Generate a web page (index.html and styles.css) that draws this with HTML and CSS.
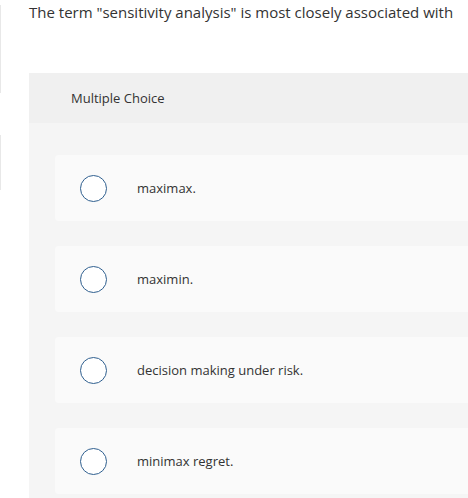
FILE: index.html
```html
<!DOCTYPE html>
<html>
<head>
<meta charset="utf-8">
<link rel="stylesheet" href="styles.css">
</head>
<body>
<div class="page">
  <div class="rail">
    <div class="rail-seg seg-a"></div>
    <div class="rail-seg seg-b"></div>
  </div>
  <div class="main">
    <p class="prompt">The term "sensitivity analysis" is most closely associated with</p>
    <div class="question">
      <div class="q-head">Multiple Choice</div>
      <div class="q-body">
        <div class="option"><span class="radio"></span><span class="label">maximax.</span></div>
        <div class="option"><span class="radio"></span><span class="label">maximin.</span></div>
        <div class="option"><span class="radio"></span><span class="label">decision making under risk.</span></div>
        <div class="option"><span class="radio"></span><span class="label">minimax regret.</span></div>
      </div>
    </div>
  </div>
</div>
</body>
</html>
```
FILE: styles.css
```css
html, body {
  margin: 0;
  padding: 0;
  background: #ffffff;
}
body {
  font-family: "Open Sans", "Liberation Sans", sans-serif;
  color: #333333;
  overflow: hidden;
}
.page {
  display: flex;
  width: 468px;
  height: 498px;
  overflow: hidden;
}
.rail {
  width: 2px;
  flex: none;
  display: flex;
  flex-direction: column;
}
.rail-seg {
  width: 1px;
  background: #e8e8e8;
}
.seg-a {
  margin-top: 5px;
  height: 88px;
}
.seg-b {
  margin-top: 42px;
  height: 55px;
}
.main {
  flex: 1;
  min-width: 0;
  padding-left: 27px;
}
.prompt {
  margin: 0;
  padding-top: 2px;
  height: 71px;
  font-size: 15px;
  line-height: 20px;
  color: #333333;
  white-space: nowrap;
}
.question {
  margin-right: -6px;
}
.q-head {
  height: 50px;
  background: #f0f0f0;
  display: flex;
  align-items: center;
  padding-left: 42px;
  font-size: 13px;
  color: #333333;
}
.q-body {
  background: #f5f5f5;
  padding: 32px 0 4px 26px;
  display: flex;
  flex-direction: column;
  gap: 25px;
}
.option {
  height: 66px;
  background: #fafafa;
  border-radius: 4px;
  display: flex;
  align-items: center;
  padding-left: 25px;
}
.radio {
  width: 25px;
  height: 25px;
  border: 1.5px solid #2f5f8f;
  border-radius: 50%;
  background: #ffffff;
  flex: none;
}
.label {
  margin-left: 30px;
  font-size: 13px;
  color: #333333;
}
```
